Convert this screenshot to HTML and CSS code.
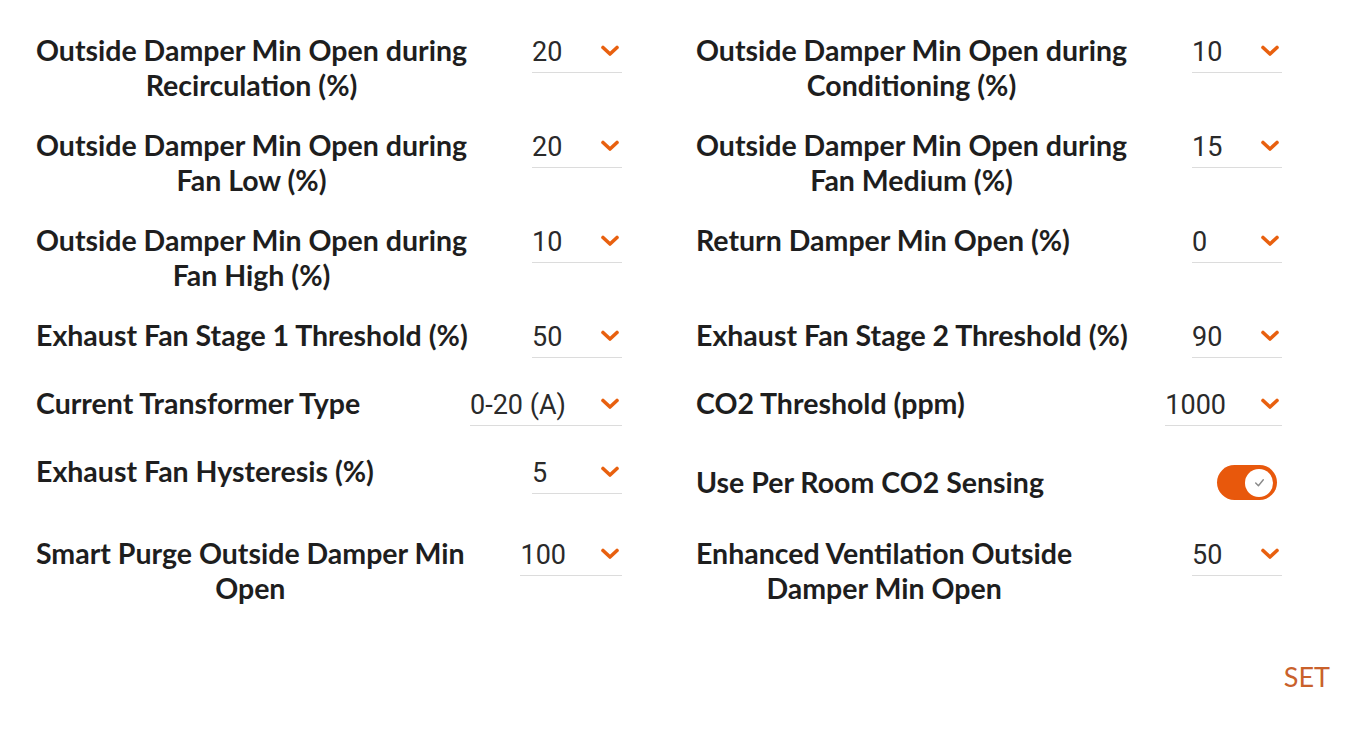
FILE: index.html
```html
<!DOCTYPE html>
<html>
<head>
<meta charset="utf-8">
<link rel="stylesheet" href="styles.css">
</head>
<body>
<main class="page">
  <div class="grid">
    <div class="field">
      <div class="label">Outside Damper Min Open during<br>Recirculation (%)</div>
      <div class="select"><span class="value">20</span><svg class="chev" viewBox="0 0 20 12"><path d="M3 2.5 L10 9 L17 2.5"/></svg></div>
    </div>
    <div class="field">
      <div class="label">Outside Damper Min Open during<br>Conditioning (%)</div>
      <div class="select"><span class="value">10</span><svg class="chev" viewBox="0 0 20 12"><path d="M3 2.5 L10 9 L17 2.5"/></svg></div>
    </div>

    <div class="field">
      <div class="label">Outside Damper Min Open during<br>Fan Low (%)</div>
      <div class="select"><span class="value">20</span><svg class="chev" viewBox="0 0 20 12"><path d="M3 2.5 L10 9 L17 2.5"/></svg></div>
    </div>
    <div class="field">
      <div class="label">Outside Damper Min Open during<br>Fan Medium (%)</div>
      <div class="select"><span class="value">15</span><svg class="chev" viewBox="0 0 20 12"><path d="M3 2.5 L10 9 L17 2.5"/></svg></div>
    </div>

    <div class="field">
      <div class="label">Outside Damper Min Open during<br>Fan High (%)</div>
      <div class="select"><span class="value">10</span><svg class="chev" viewBox="0 0 20 12"><path d="M3 2.5 L10 9 L17 2.5"/></svg></div>
    </div>
    <div class="field">
      <div class="label">Return Damper Min Open (%)</div>
      <div class="select"><span class="value">0</span><svg class="chev" viewBox="0 0 20 12"><path d="M3 2.5 L10 9 L17 2.5"/></svg></div>
    </div>

    <div class="field">
      <div class="label">Exhaust Fan Stage 1 Threshold (%)</div>
      <div class="select"><span class="value">50</span><svg class="chev" viewBox="0 0 20 12"><path d="M3 2.5 L10 9 L17 2.5"/></svg></div>
    </div>
    <div class="field">
      <div class="label">Exhaust Fan Stage 2 Threshold (%)</div>
      <div class="select"><span class="value">90</span><svg class="chev" viewBox="0 0 20 12"><path d="M3 2.5 L10 9 L17 2.5"/></svg></div>
    </div>

    <div class="field">
      <div class="label">Current Transformer Type</div>
      <div class="select"><span class="value">0-20 (A)</span><svg class="chev" viewBox="0 0 20 12"><path d="M3 2.5 L10 9 L17 2.5"/></svg></div>
    </div>
    <div class="field">
      <div class="label">CO2 Threshold (ppm)</div>
      <div class="select"><span class="value">1000</span><svg class="chev" viewBox="0 0 20 12"><path d="M3 2.5 L10 9 L17 2.5"/></svg></div>
    </div>

    <div class="field">
      <div class="label">Exhaust Fan Hysteresis (%)</div>
      <div class="select"><span class="value">5</span><svg class="chev" viewBox="0 0 20 12"><path d="M3 2.5 L10 9 L17 2.5"/></svg></div>
    </div>
    <div class="field field-center">
      <div class="label">Use Per Room CO2 Sensing</div>
      <div class="switch">
        <div class="track">
          <div class="thumb"><svg class="check" viewBox="0 0 12 12"><path d="M2.5 6.5 L5 9 L9.5 3.5"/></svg></div>
        </div>
      </div>
    </div>

    <div class="field">
      <div class="label">Smart Purge Outside Damper Min<br>Open</div>
      <div class="select"><span class="value">100</span><svg class="chev" viewBox="0 0 20 12"><path d="M3 2.5 L10 9 L17 2.5"/></svg></div>
    </div>
    <div class="field">
      <div class="label">Enhanced Ventilation Outside<br>Damper Min Open</div>
      <div class="select"><span class="value">50</span><svg class="chev" viewBox="0 0 20 12"><path d="M3 2.5 L10 9 L17 2.5"/></svg></div>
    </div>
  </div>
  <div class="actions">
    <button class="set">SET</button>
  </div>
</main>
</body>
</html>
```
FILE: styles.css
```css
html, body {
  margin: 0;
  padding: 0;
  background: #ffffff;
}
.page {
  padding: 33px 0 0 36px;
  font-family: Lato, "Liberation Sans", sans-serif;
}
.grid {
  display: grid;
  grid-template-columns: 586px 586px;
  column-gap: 74px;
  row-gap: 25px;
}
.field {
  display: flex;
  justify-content: space-between;
  align-items: flex-start;
  min-height: 43px;
}
.field-center {
  align-items: center;
}
.label {
  width: fit-content;
  white-space: nowrap;
  font-weight: 700;
  font-size: 28.5px;
  line-height: 35px;
  color: #1e1e1e;
  text-align: center;
}
.select {
  display: inline-flex;
  align-items: center;
  min-width: 90px;
  padding-top: 2px;
  padding-bottom: 2px;
  border-bottom: 1px solid #dcdcdc;
  margin-bottom: 3px;
  box-sizing: border-box;
}
.value {
  font-family: Roboto, "Liberation Sans", sans-serif;
  font-size: 27px;
  line-height: 35px;
  color: #2a2a2a;
  margin-right: 34px;
}
.chev {
  width: 20px;
  height: 12px;
  margin-left: auto;
  margin-right: 2px;
  margin-top: -3px;
}
.chev path {
  fill: none;
  stroke: #e8600f;
  stroke-width: 3.6;
  stroke-linecap: round;
  stroke-linejoin: round;
}
.switch {
  height: 57px;
  display: flex;
  align-items: center;
  padding-right: 5px;
}
.track {
  width: 60px;
  height: 35px;
  border-radius: 18px;
  background: #e8580c;
  display: flex;
  align-items: center;
  justify-content: flex-end;
  padding-right: 4px;
  box-sizing: border-box;
}
.thumb {
  width: 28px;
  height: 28px;
  border-radius: 50%;
  background: #ffffff;
  display: flex;
  align-items: center;
  justify-content: center;
}
.check {
  width: 13px;
  height: 13px;
}
.check path {
  fill: none;
  stroke: #8a8a8a;
  stroke-width: 1.3;
  stroke-linecap: round;
  stroke-linejoin: round;
}
.actions {
  display: flex;
  justify-content: flex-end;
  padding-right: 38px;
  margin-top: 53px;
}
.set {
  background: none;
  border: none;
  padding: 0 4px;
  font-family: Lato, "Liberation Sans", sans-serif;
  font-size: 27px;
  line-height: 35px;
  color: #c9612b;
  cursor: pointer;
}
```
